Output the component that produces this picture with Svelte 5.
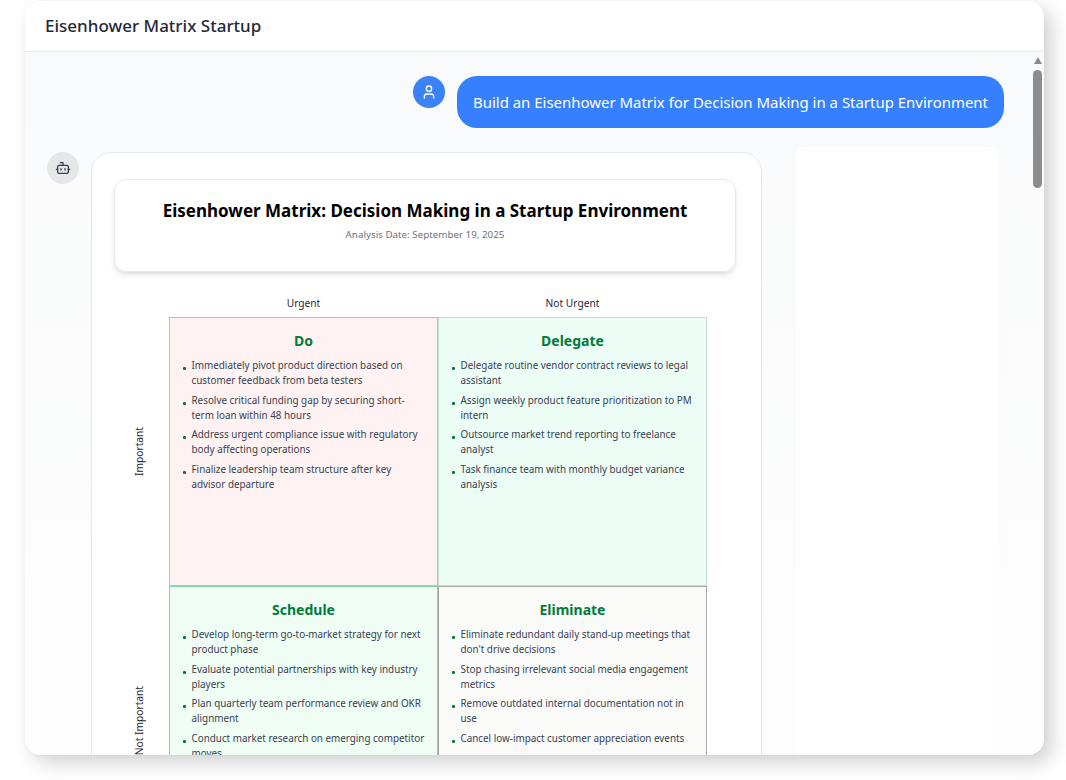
<script>
  const columns = ['Urgent', 'Not Urgent'];

  const rows = [
    {
      label: 'Important',
      cells: [
        {
          title: 'Do',
          tone: 'do',
          items: [
            'Immediately pivot product direction based on customer feedback from beta testers',
            'Resolve critical funding gap by securing short-term loan within 48 hours',
            'Address urgent compliance issue with regulatory body affecting operations',
            'Finalize leadership team structure after key advisor departure'
          ]
        },
        {
          title: 'Delegate',
          tone: 'delegate',
          items: [
            'Delegate routine vendor contract reviews to legal assistant',
            'Assign weekly product feature prioritization to PM intern',
            'Outsource market trend reporting to freelance analyst',
            'Task finance team with monthly budget variance analysis'
          ]
        }
      ]
    },
    {
      label: 'Not Important',
      cells: [
        {
          title: 'Schedule',
          tone: 'schedule',
          items: [
            'Develop long-term go-to-market strategy for next product phase',
            'Evaluate potential partnerships with key industry players',
            'Plan quarterly team performance review and OKR alignment',
            'Conduct market research on emerging competitor moves'
          ]
        },
        {
          title: 'Eliminate',
          tone: 'eliminate',
          items: [
            "Eliminate redundant daily stand-up meetings that don't drive decisions",
            'Stop chasing irrelevant social media engagement metrics',
            'Remove outdated internal documentation not in use',
            'Cancel low-impact customer appreciation events'
          ]
        }
      ]
    }
  ];
</script>

<div class="page">
  <div class="window">
    <header class="topbar">
      <h1>Eisenhower Matrix Startup</h1>
    </header>

    <div class="chat">
      <div class="user-row">
        <div class="avatar user-avatar">
          <svg width="16" height="16" viewBox="0 0 24 24" fill="none" stroke="currentColor" stroke-width="2" stroke-linecap="round" stroke-linejoin="round">
            <path d="M19 21v-2a4 4 0 0 0-4-4H9a4 4 0 0 0-4 4v2" />
            <circle cx="12" cy="7" r="4" />
          </svg>
        </div>
        <div class="bubble">Build an Eisenhower Matrix for Decision Making in a Startup Environment</div>
      </div>

      <div class="bot-row">
        <div class="avatar bot-avatar">
          <svg width="16" height="16" viewBox="0 0 24 24" fill="none" stroke="currentColor" stroke-width="2" stroke-linecap="round" stroke-linejoin="round">
            <path d="M12 8V4H8" />
            <rect x="4" y="8" width="16" height="12" rx="2" />
            <path d="M2 14h2" />
            <path d="M20 14h2" />
            <path d="M15 13v2" />
            <path d="M9 13v2" />
          </svg>
        </div>

        <div class="card">
          <div class="report-head">
            <h2>Eisenhower Matrix: Decision Making in a Startup Environment</h2>
            <p>Analysis Date: September 19, 2025</p>
          </div>

          <div class="matrix">
            <div></div>
            {#each columns as col}
              <div class="col-label">{col}</div>
            {/each}

            {#each rows as row}
              <div class="row-label"><span>{row.label}</span></div>
              {#each row.cells as cell}
                <section class="cell {cell.tone}">
                  <h3>{cell.title}</h3>
                  <ul>
                    {#each cell.items as item}
                      <li>{item}</li>
                    {/each}
                  </ul>
                </section>
              {/each}
            {/each}
          </div>
        </div>

        <aside class="side"></aside>
      </div>
    </div>

    <div class="scrollbar">
      <div class="arrow"></div>
      <div class="thumb"></div>
    </div>
  </div>
</div>

<style>
  :global(body) {
    margin: 0;
    background: #fff;
  }

  .page {
    height: 780px;
    overflow: hidden;
    padding: 1px 0 0 25px;
    box-sizing: border-box;
  }

  .window {
    position: relative;
    width: 1019px;
    height: 754px;
    display: flex;
    flex-direction: column;
    background: #fff;
    border-radius: 16px;
    overflow: hidden;
    box-shadow: 8px 8px 20px rgba(0, 0, 0, 0.18), 0 0 4px rgba(0, 0, 0, 0.04);
    font-family: 'Noto Sans', sans-serif;
  }

  .topbar {
    height: 50px;
    flex-shrink: 0;
    display: flex;
    align-items: center;
    padding: 0 20px 2px;
    box-sizing: content-box;
    height: 48px;
    background: #fff;
    border-bottom: 1px solid #e5e7eb;
  }
  .topbar h1 {
    margin: 0;
    font-size: 17px;
    font-weight: 500;
    color: #1f2937;
  }

  .chat {
    flex: 1;
    min-height: 0;
    overflow: hidden;
    padding: 24px 40px 0 22px;
    background: linear-gradient(#f9fafb, #fdfdfd 80%);
  }

  .user-row {
    display: flex;
    justify-content: flex-end;
    gap: 12px;
    margin-bottom: 24px;
  }
  .avatar {
    width: 32px;
    height: 32px;
    flex-shrink: 0;
    border-radius: 50%;
    display: flex;
    align-items: center;
    justify-content: center;
  }
  .user-avatar {
    background: #3b82f6;
    color: #fff;
  }
  .bot-avatar {
    background: #e5e7eb;
    color: #374151;
  }
  .bubble {
    padding: 14px 16px;
    height: 52px;
    box-sizing: border-box;
    border-radius: 20px;
    background: #3680ff;
    color: #fff;
    font-size: 14.96px;
    line-height: 24px;
  }

  .bot-row {
    display: flex;
    align-items: flex-start;
    gap: 12px;
  }
  .card {
    width: 671px;
    flex-shrink: 0;
    box-sizing: border-box;
    padding: 26px 25px 24px 22px;
    background: #fff;
    border: 1px solid #e5e7eb;
    border-radius: 20px;
  }

  .report-head {
    height: 93px;
    box-sizing: border-box;
    padding-top: 19px;
    text-align: center;
    border: 1px solid #e5e7eb;
    border-radius: 12px;
    box-shadow: 0 4px 6px -1px rgba(0, 0, 0, 0.1), 0 2px 4px -2px rgba(0, 0, 0, 0.1);
  }
  .report-head h2 {
    margin: 0;
    font-size: 17px;
    line-height: 24px;
    font-weight: 700;
    color: #000;
  }
  .report-head p {
    margin: 4px 0 0;
    font-size: 9.8px;
    line-height: 16px;
    color: #6b7280;
  }

  .matrix {
    display: grid;
    grid-template-columns: 55px 269px 269px;
    grid-template-rows: 45px 269px 269px;
  }
  .col-label {
    align-self: end;
    padding-bottom: 6px;
    text-align: center;
    font-size: 10.2px;
    line-height: 16px;
    color: #1f2937;
  }
  .row-label {
    display: flex;
    align-items: center;
    justify-content: center;
    padding-right: 5px;
    font-size: 10.2px;
    color: #1f2937;
  }
  .row-label span {
    writing-mode: vertical-rl;
    transform: rotate(180deg);
  }

  .cell {
    box-sizing: border-box;
    padding: 12px;
    border: 1px solid;
  }
  .do { background: #fef2f2; border-color: #f5a3a3; }
  .delegate { background: #ecfdf5; border-color: #c5d9d5; }
  .schedule { background: #f0fdf4; border-color: #86d3a8; }
  .eliminate { background: #fafaf9; border-color: #a8a8a2; }

  .cell h3 {
    margin: 0 0 6px;
    text-align: center;
    font-size: 14px;
    line-height: 22px;
    font-weight: 700;
    color: #047a3c;
  }
  .cell ul {
    margin: 0;
    padding: 0;
    list-style: none;
  }
  .cell li {
    position: relative;
    padding-left: 9.5px;
    margin-bottom: 4.5px;
    font-size: 9.85px;
    line-height: 15px;
    color: #374151;
  }
  .cell li::before {
    content: '';
    position: absolute;
    left: 1px;
    top: 9px;
    width: 3px;
    height: 3px;
    border-radius: 1px;
    background: #047a3c;
  }

  .side {
    width: 203px;
    height: 640px;
    margin: -5px 0 0 22px;
    flex-shrink: 0;
    background: #fff;
    border-radius: 8px;
    box-shadow: 0 0 12px rgba(0, 0, 0, 0.01);
  }

  .scrollbar {
    position: absolute;
    top: 56px;
    right: 2px;
    width: 9px;
    display: flex;
    flex-direction: column;
    align-items: center;
    gap: 6px;
  }
  .arrow {
    width: 0;
    height: 0;
    border-left: 4.5px solid transparent;
    border-right: 4.5px solid transparent;
    border-bottom: 7px solid #8a8a8a;
  }
  .thumb {
    width: 9px;
    height: 118px;
    border-radius: 5px;
    background: #8c8c8c;
  }
</style>
